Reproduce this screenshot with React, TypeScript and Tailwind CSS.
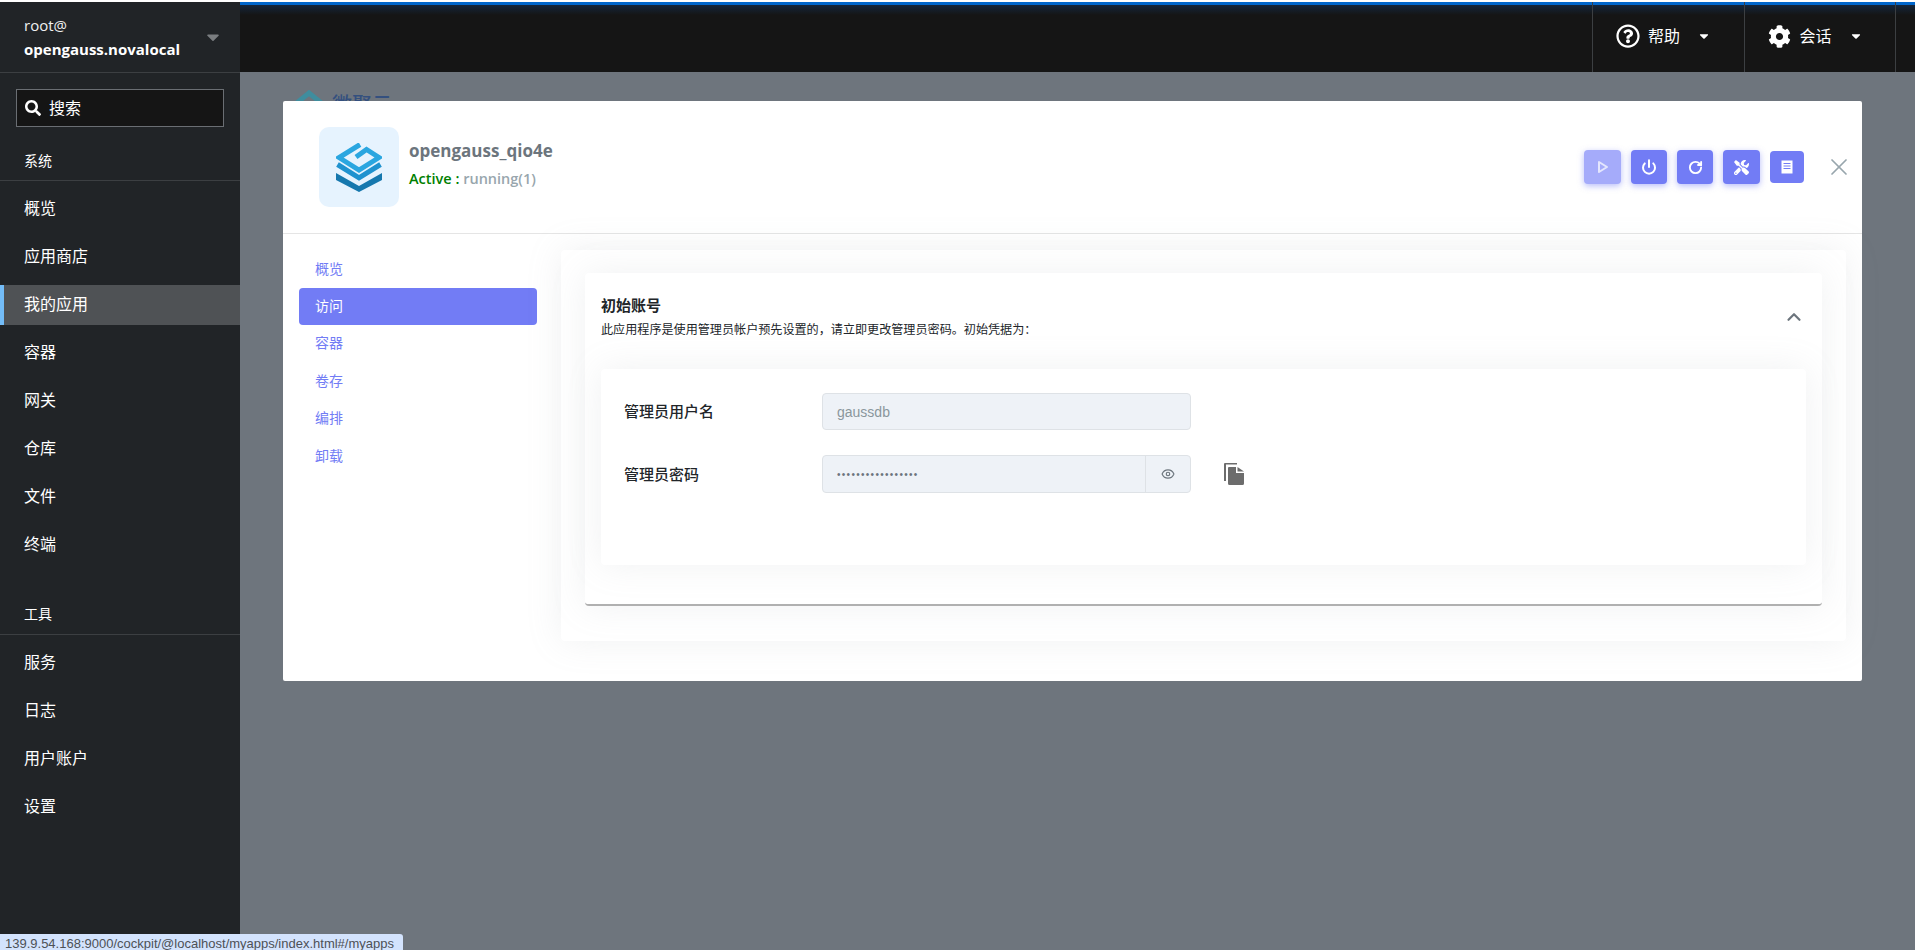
import { ChevronUp, Eye, Power, RotateCw, X } from "lucide-react";
import { FaCaretDown, FaCog, FaRegQuestionCircle, FaSearch, FaTools } from "react-icons/fa";

const SYSTEM_ITEMS = ["概览", "应用商店", "我的应用", "容器", "网关", "仓库", "文件", "终端"];
const TOOL_ITEMS = ["服务", "日志", "用户账户", "设置"];
const APP_TABS = ["概览", "访问", "容器", "卷存", "编排", "卸载"];

function SideItem({ label, active }: { label: string; active?: boolean }) {
  return (
    <a
      className={
        active
          ? "flex h-10 items-center border-l-4 border-[#73bcf7] bg-[#4f5255] pb-[2px] pl-5 text-base text-white"
          : "flex h-10 items-center pb-[2px] pl-6 text-base text-white"
      }
    >
      {label}
    </a>
  );
}

function TopButton({ icon, label }: { icon: React.ReactNode; label: string }) {
  return (
    <button type="button" className="flex h-full w-[151.5px] items-center border-l border-[#3c3f42] pb-[2px] pl-[23px] text-base text-white">
      <span className="flex w-6 justify-center">{icon}</span>
      <span className="ml-2">{label}</span>
      <FaCaretDown className="ml-[17px] text-white" size={14} />
    </button>
  );
}

function ActionButton({ children, faded, wide }: { children: React.ReactNode; faded?: boolean; wide?: boolean }) {
  const size = wide ? "w-[37px]" : "w-9";
  const tone = faded ? "bg-[#a5abfa]" : "bg-[#727cf5]";
  return (
    <button type="button" className={`flex h-[34px] items-center justify-center rounded shadow-[0_2px_6px_0_rgba(114,124,245,0.5)] ${size} ${tone}`}>
      {children}
    </button>
  );
}

function AppLogo() {
  return (
    <svg width="46" height="49" viewBox="0 0 46 49" fill="none">
      <path d="M24 1.5 L3 14.5 L23 27 L43 14.5 L30.5 6.5 L20 14" stroke="#2aa6e0" strokeWidth="5" strokeLinejoin="miter" />
      <path d="M1.5 21.5 L23 34.8 L44.5 21.5" stroke="#1f92cf" strokeWidth="5" />
      <path d="M0 30 L0 37 L23 49 L46 37 L46 30 L23 43 Z" fill="#1678ae" />
    </svg>
  );
}

function CopyIcon() {
  return (
    <svg className="ml-[33px]" width="20" height="22" viewBox="0 0 20 22" fill="#6c6c6c">
      <path d="M0 1 Q0 0 1 0 H13 V1.6 H2 V18 H0 Z" />
      <path d="M4 5 Q4 4 5 4 H12 V10 H20 V20.5 Q20 22 18.5 22 H5.5 Q4 22 4 20.5 Z" />
      <path d="M13.5 4 L20 8.6 H13.5 Z" />
    </svg>
  );
}

function Sidebar() {
  return (
    <aside className="flex w-[240px] shrink-0 flex-col bg-[#212427]">
      <div className="relative flex h-[71px] flex-col justify-center border-b border-[#3c3f42] pl-6 text-[15px] leading-[24px] text-white">
        <span className="text-[#f0f0f0]">root@</span>
        <span className="font-bold">opengauss.novalocal</span>
        <FaCaretDown className="absolute left-[203px] top-[25px] text-[#7a7d80]" size={20} />
      </div>
      <div className="mx-4 mt-4 flex h-[38px] items-center border border-[#6a6e73] bg-[#151515] pl-2 text-base text-white">
        <FaSearch size={16} />
        <span className="ml-2">搜索</span>
      </div>
      <div className="mt-6 border-b border-[#3c3f42] pb-[9px] pl-6 text-sm leading-5 text-white">系统</div>
      <nav className="flex flex-col gap-2 pt-2">
        {SYSTEM_ITEMS.map((item) => (
          <SideItem key={item} label={item} active={item === "我的应用"} />
        ))}
      </nav>
      <div className="mt-[39px] border-b border-[#3c3f42] pb-[10px] pl-6 text-sm leading-5 text-white">工具</div>
      <nav className="flex flex-col gap-2 pt-2">
        {TOOL_ITEMS.map((item) => (
          <SideItem key={item} label={item} />
        ))}
      </nav>
    </aside>
  );
}

function AppHeader() {
  return (
    <header className="flex h-[133px] items-center border-b border-[#e5e5e5] pl-9 pr-[9px]">
      <div className="flex h-20 w-20 items-center justify-center rounded-[10px] bg-[#e6f3fe]">
        <AppLogo />
      </div>
      <div className="ml-[10px] pb-[6px]">
        <h4 className="text-[17px] font-bold leading-6 text-[#6c757d]">opengauss_qio4e</h4>
        <p className="mt-[6px] text-[14.5px] font-semibold leading-5">
          <span className="text-[#008000]">Active : </span>
          <span className="text-[#98a6ad]">running(1)</span>
        </p>
      </div>
      <div className="ml-auto flex items-center gap-[10px]">
        <ActionButton faded wide>
          <svg width="12" height="14" viewBox="0 0 12 14" fill="none">
            <path d="M2 2 L10 7 L2 12 Z" stroke="#e4e6fd" strokeWidth="2" strokeLinejoin="round" />
          </svg>
        </ActionButton>
        <ActionButton>
          <Power size={16} strokeWidth={3} color="#ffffff" />
        </ActionButton>
        <ActionButton>
          <RotateCw size={15} strokeWidth={3} color="#ffffff" />
        </ActionButton>
        <ActionButton wide>
          <FaTools size={15} color="#ffffff" />
        </ActionButton>
        <button type="button" className="flex h-8 w-[34px] items-center justify-center rounded bg-[#727cf5]">
          <svg width="12" height="14" viewBox="0 0 12 14">
            <rect x="0.5" y="0.5" width="11" height="13" fill="#ffffff" />
            <path d="M2.5 3.5 H9.5 M2.5 6 H9.5 M2.5 8.5 H9.5" stroke="#727cf5" strokeWidth="1" />
          </svg>
        </button>
        <X className="ml-[11px]" size={28} strokeWidth={1.5} color="#98a6ad" />
      </div>
    </header>
  );
}

function AccessPanel() {
  return (
    <section className="h-[391px] flex-1 rounded bg-white shadow-[0_0_35px_0_rgba(154,161,171,0.15)]">
      <div className="mx-6 mt-[23px] h-[333px] rounded border-b-2 border-[#b0b0b0] bg-white px-4 pt-px shadow-[0_0_35px_0_rgba(154,161,171,0.15)]">
        <div className="relative h-[95px] pt-[20px]">
          <h5 className="text-[15px] font-semibold leading-[22px] text-[#212529]">初始账号</h5>
          <p className="mt-1 text-[12.1px] leading-5 text-[#212529]">此应用程序是使用管理员帐户预先设置的，请立即更改管理员密码。初始凭据为：</p>
          <ChevronUp className="absolute right-px top-[32px]" size={22} strokeWidth={2.4} color="#6c757d" />
        </div>
        <div className="h-[196px] rounded bg-white pl-[23px] pt-6 shadow-[0_0_35px_0_rgba(154,161,171,0.15)]">
          <div className="flex h-[37px] items-center">
            <label className="w-[198px] text-[15px] font-medium text-[#212529]">管理员用户名</label>
            <div className="flex h-[37px] w-[369px] items-center rounded border border-[#dee2e6] bg-[#eef2f7] pl-[14px] font-['Liberation_Sans',sans-serif] text-sm text-[#8a969c]">
              gaussdb
            </div>
          </div>
          <div className="mt-[25px] flex h-[38px] items-center">
            <label className="w-[198px] text-[15px] font-medium text-[#212529]">管理员密码</label>
            <div className="flex h-[38px] w-[369px] items-center rounded border border-[#dee2e6] bg-[#eef2f7]">
              <span className="flex-1 pl-[14px] font-['Liberation_Sans',sans-serif] text-[10px] tracking-[1.3px] text-[#6c757d]">•••••••••••••••••</span>
              <span className="flex h-full w-[45px] items-center justify-center border-l border-[#dee2e6]">
                <Eye size={14} strokeWidth={2} color="#6c757d" />
              </span>
            </div>
            <CopyIcon />
          </div>
        </div>
      </div>
    </section>
  );
}

export default function App() {
  return (
    <div className="relative flex h-[950px] w-full flex-col overflow-hidden bg-[#6e757d] font-['Open_Sans','Noto_Sans_CJK_SC',sans-serif]">
      <div className="h-[2px] shrink-0 bg-white" />
      <div className="flex flex-1">
        <Sidebar />
        <div className="flex min-w-0 flex-1 flex-col">
          <div className="flex h-[70px] shrink-0 justify-end bg-[linear-gradient(#0066cc_0,#0066cc_3px,#14263c_3px,#151515_13px)] pr-[19px]">
            <TopButton icon={<FaRegQuestionCircle size={24} color="#ffffff" />} label="帮助" />
            <TopButton icon={<FaCog size={23} color="#ffffff" />} label="会话" />
            <span className="w-px bg-[#3c3f42]" />
          </div>
          <main className="relative flex-1 pl-[43px] pr-[53px] pt-[29px]">
            <div className="absolute left-[51px] top-[18px] flex items-center gap-[5px] text-[#34507f]">
              <svg width="36" height="30" viewBox="0 0 36 30" fill="none">
                <path d="M2 16 L18 3 L34 16" stroke="#3f8d9e" strokeWidth="5" />
              </svg>
              <span className="text-xl font-medium leading-6">微聚云</span>
            </div>
            <div className="relative h-[580px] rounded-[2px] bg-white">
              <AppHeader />
              <div className="flex pl-4 pr-4 pt-4">
                <ul className="mr-6 w-[238px] shrink-0">
                  {APP_TABS.map((tab) => (
                    <li
                      key={tab}
                      className={
                        tab === "访问"
                          ? "flex h-[37px] items-center rounded bg-[#727cf5] pl-4 text-sm text-white"
                          : "flex h-[37.5px] items-center pl-4 text-sm text-[#727cf5]"
                      }
                    >
                      {tab}
                    </li>
                  ))}
                </ul>
                <AccessPanel />
              </div>
            </div>
          </main>
        </div>
      </div>
      <div className="absolute bottom-0 left-0 h-4 w-[403px] overflow-hidden rounded-tr-[3px] bg-[#d3e3fd] pl-[5px] font-['Liberation_Sans',sans-serif] text-[13px] leading-[20px] text-[#4d5156]">
        139.9.54.168:9000/cockpit/@localhost/myapps/index.html#/myapps
      </div>
    </div>
  );
}
